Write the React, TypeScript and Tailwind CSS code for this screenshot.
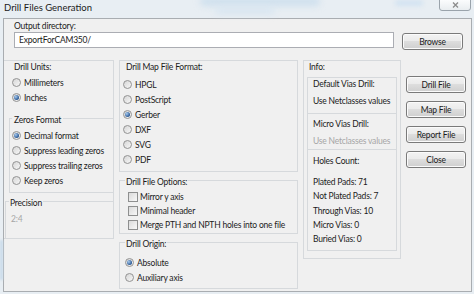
import React from "react";

function Radio({ checked = false }: { checked?: boolean }) {
  return (
    <span className="flex h-[9px] w-[9px] shrink-0 items-center justify-center rounded-full border border-[#939393] bg-[linear-gradient(135deg,#d6d6d6,#f7f7f7)]">
      {checked && (
        <span className="h-[5px] w-[5px] rounded-full bg-[radial-gradient(circle_at_35%_35%,#a8cbef,#21508d_75%)]" />
      )}
    </span>
  );
}

function RadioRow({ label, checked = false }: { label: string; checked?: boolean }) {
  return (
    <div className="flex h-[15px] items-center gap-[3px]">
      <Radio checked={checked} />
      <span>{label}</span>
    </div>
  );
}

function CheckRow({ label }: { label: string }) {
  return (
    <div className="flex h-[14px] items-center gap-[2px]">
      <span className="h-[10px] w-[10px] shrink-0 border border-[#8e8f8f] bg-[linear-gradient(135deg,#dadada,#f8f8f8)]" />
      <span>{label}</span>
    </div>
  );
}

function Btn({ label, className = "" }: { label: string; className?: string }) {
  return (
    <div
      className={
        "flex h-[17px] w-[60px] items-center justify-center rounded-[3px] border border-[#7a7a7a] bg-[linear-gradient(#f3f3f3,#ebebeb_45%,#dddddd_50%,#cfcfcf)] shadow-[inset_0_0_0_1px_#fbfbfb] " +
        className
      }
    >
      {label}
    </div>
  );
}

export default function App() {
  return (
    <div className="relative h-[294px] w-[474px] overflow-hidden whitespace-nowrap bg-[#e8eef3] font-['Lato','Noto_Sans',sans-serif] text-[8.5px] leading-[12px] tracking-[-0.2px] text-[#1b1b1b]">
      {/* glass background bits */}
      <div className="absolute left-[200px] top-[-3px] h-[9px] w-[120px] rounded-full bg-[#cfe0ee] blur-[3px]" />
      <div className="absolute left-[215px] top-[8px] h-[6px] w-[60px] rounded-full bg-[#d7e5f1] blur-[3px]" />
      <div className="absolute left-[395px] top-[0px] h-[6px] w-[28px] rounded-full bg-[#d3e3f1] blur-[2px]" />
      <div className="absolute left-[0px] top-[240px] h-[40px] w-[3px] bg-[#c9dbea] blur-[1px]" />

      {/* close button */}
      <div className="absolute left-[439px] top-[-1px] flex h-[12px] w-[32px] items-center justify-center rounded-b-[3px] border border-[#9aa3ab] bg-[linear-gradient(#fbfcfd,#e9edf0)]">
        <svg width="7" height="6" viewBox="0 0 7 6">
          <path d="M1 0.5 L6 5.5 M6 0.5 L1 5.5" stroke="#8c8c8c" strokeWidth="1.3" />
        </svg>
      </div>

      {/* title */}
      <div className="relative h-[18px] pl-[4px] pt-[2px] text-[9.5px] tracking-normal">Drill Files Generation</div>

      {/* dialog frame */}
      <div className="ml-[3px] flex h-[274px] w-[469px] flex-col border border-[#a9adb1] bg-[#f0f0f0]">
        <div className="mt-[1px] pl-[10px]">Output directory:</div>
        <div className="flex items-start">
          <div className="ml-[10px] flex h-[16px] w-[380px] items-center border border-[#abadb3] bg-white pl-[4px]">
            ExportForCAM350/
          </div>
          <Btn label="Browse" className="ml-[8px] mt-[1px] h-[16px] w-[61px]" />
        </div>

        <div className="mt-[10px] flex items-start">
          {/* left column */}
          <div className="flex h-[179px] w-[110px] flex-col border-b border-r border-t border-[#d6d9dc]">
            <div className="pl-[10px]">Drill Units:</div>
            <div className="mt-[2px] pl-[8px]">
              <RadioRow label="Millimeters" />
              <RadioRow label="Inches" checked />
            </div>
            <fieldset className="ml-[5px] mt-[6px] border border-r-0 border-[#d6d9dc] pb-[4px] pl-[2px]">
              <legend className="px-[2px] pt-[3px]">Zeros Format</legend>
              <div className="mt-[2px]">
                <RadioRow label="Decimal format" checked />
                <RadioRow label="Suppress leading zeros" />
                <RadioRow label="Suppress trailing zeros" />
                <RadioRow label="Keep zeros" />
              </div>
            </fieldset>
            <fieldset className="ml-[1px] mt-[1px] flex-1 border border-b-0 border-r-0 border-[#d6d9dc] pl-[3px]">
              <legend className="px-[1px] pt-[3px]">Precision</legend>
              <div className="mt-[4px] pl-[2px] text-[#a6a6a6]">2:4</div>
            </fieldset>
          </div>

          {/* middle column */}
          <div className="ml-[5px] flex w-[179px] flex-col">
            <div className="h-[112px] border border-[#d6d9dc]">
              <div className="pl-[6px]">Drill Map File Format:</div>
              <div className="mt-[4px] pl-[3px]">
                <RadioRow label="HPGL" />
                <RadioRow label="PostScript" />
                <RadioRow label="Gerber" checked />
                <RadioRow label="DXF" />
                <RadioRow label="SVG" />
                <RadioRow label="PDF" />
              </div>
            </div>
            <fieldset className="mt-[1px] border border-[#d6d9dc] pb-[1px] pl-[5px]">
              <legend className="px-[1px] pt-[3px]">Drill File Options:</legend>
              <div className="ml-[3px] mt-[2px]">
                <CheckRow label="Mirror y axis" />
                <CheckRow label="Minimal header" />
                <CheckRow label="Merge PTH and NPTH holes into one file" />
              </div>
            </fieldset>
            <fieldset className="mt-[1px] border border-[#d6d9dc] pb-[3px] pl-[5px]">
              <legend className="px-[1px] pt-[3px]">Drill Origin:</legend>
              <div className="mt-[5px] pl-[-1px]">
                <RadioRow label="Absolute" checked />
                <RadioRow label="Auxiliary axis" />
              </div>
            </fieldset>
          </div>

          {/* info column */}
          <div className="ml-[5px] flex h-[199px] w-[98px] flex-col border border-[#d6d9dc]">
            <div className="pl-[5px]">Info:</div>
            <div className="mx-[3px] mt-[4px] border border-[#d6d9dc] pb-[6px] pl-[5px]">
              <div>Default Vias Drill:</div>
              <div className="mt-[5px]">Use Netclasses values</div>
            </div>
            <div className="mx-[3px] border border-t-0 border-[#d6d9dc] pb-[2px] pl-[5px]">
              <div className="mt-[4px]">Micro Vias Drill:</div>
              <div className="mt-[5px] text-[#a6a6a6]">Use Netclasses values</div>
            </div>
            <div className="mx-[3px] border border-t-0 border-[#d6d9dc] pb-[4px] pl-[5px] pt-[5px]">
              <div>Holes Count:</div>
              <div className="mt-[8px] leading-[14.3px]">
                <div>Plated Pads: 71</div>
                <div>Not Plated Pads: 7</div>
                <div>Through Vias: 10</div>
                <div>Micro Vias: 0</div>
                <div>Buried Vias: 0</div>
              </div>
            </div>
          </div>

          {/* buttons */}
          <div className="ml-[5px] mt-[16px] flex flex-col gap-[8px]">
            <Btn label="Drill File" />
            <Btn label="Map File" />
            <Btn label="Report File" />
            <Btn label="Close" />
          </div>
        </div>
      </div>
    </div>
  );
}
